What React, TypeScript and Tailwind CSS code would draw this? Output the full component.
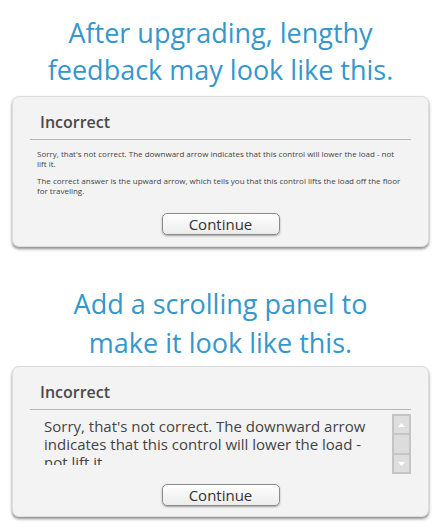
import React from "react";

const font = { fontFamily: '"Open Sans", "Noto Sans", sans-serif' };

function Header() {
  return (
    <div className="px-[17px]">
      <div className="h-[43px] border-b border-[#b5b5b5] pl-[10px] pt-[14px]">
        <div className="text-[16px] leading-[22px] font-semibold text-[#4a4a4a]">Incorrect</div>
      </div>
    </div>
  );
}

function ContinueButton() {
  return (
    <div className="flex justify-center">
      <div className="w-[118px] h-[22px] rounded-[5px] border border-[#8c8c8c] bg-gradient-to-b from-white to-[#ececec] shadow-[0_1px_2px_rgba(0,0,0,0.35)] flex items-center justify-center text-[15px] leading-none text-[#333]">
        Continue
      </div>
    </div>
  );
}

function Panel({ children }: { children: React.ReactNode }) {
  return (
    <div className="mx-[12px] h-[151px] rounded-[7px] border border-[#dcdcdc] bg-[#f3f3f3] shadow-[0_2px_3px_rgba(0,0,0,0.45)] flex flex-col">
      {children}
    </div>
  );
}

function Arrow({ up }: { up?: boolean }) {
  return (
    <div className="h-[19px] border border-[#c4c4c4] bg-[#dedede] flex items-center justify-center">
      <svg width="7" height="4" viewBox="0 0 7 4">
        {up ? <polygon points="0,4 7,4 3.5,0" fill="#fff" /> : <polygon points="0,0 7,0 3.5,4" fill="#fff" />}
      </svg>
    </div>
  );
}

export default function App() {
  return (
    <div className="w-[441px] h-[532px] bg-white overflow-hidden" style={font}>
      <div className="pt-[14px] text-center text-[27px] leading-[37px] text-[#3597cc]">
        <div>After upgrading, lengthy</div>
        <div>feedback may look like this.</div>
      </div>
      <div className="mt-[8px]">
        <Panel>
          <Header />
          <div className="pl-[24px] pr-[23px] pt-[9px] h-[73px] text-[8px] leading-[10px] text-[#444]">
            <p>Sorry, that's not correct. The downward arrow indicates that this control will lower the load - not lift it.</p>
            <p className="mt-[7px]">The correct answer is the upward arrow, which tells you that this control lifts the load off the floor for traveling.</p>
          </div>
          <ContinueButton />
        </Panel>
      </div>
      <div className="mt-[37px] text-center text-[27px] leading-[39px] text-[#3597cc]">
        <div>Add a scrolling panel to</div>
        <div>make it look like this.</div>
      </div>
      <div className="mt-[4px]">
        <Panel>
          <Header />
          <div className="flex h-[60px] mt-[4px] pr-[17px]">
            <div className="flex-1 h-[51px] overflow-hidden pl-[31px] pr-[14px] pt-[3px] text-[15px] leading-[18px] text-[#444]">
              Sorry, that's not correct. The downward arrow indicates that this control will lower the load - not lift it.
            </div>
            <div className="w-[19px] h-[60px] border border-[#c4c4c4] flex flex-col bg-[#ececec]">
              <Arrow up />
              <div className="h-[20px] border border-[#c4c4c4] bg-[#dcdcdc]" />
              <div className="flex-1" />
              <Arrow />
            </div>
          </div>
          <div className="mt-[10px]">
            <ContinueButton />
          </div>
        </Panel>
      </div>
    </div>
  );
}
